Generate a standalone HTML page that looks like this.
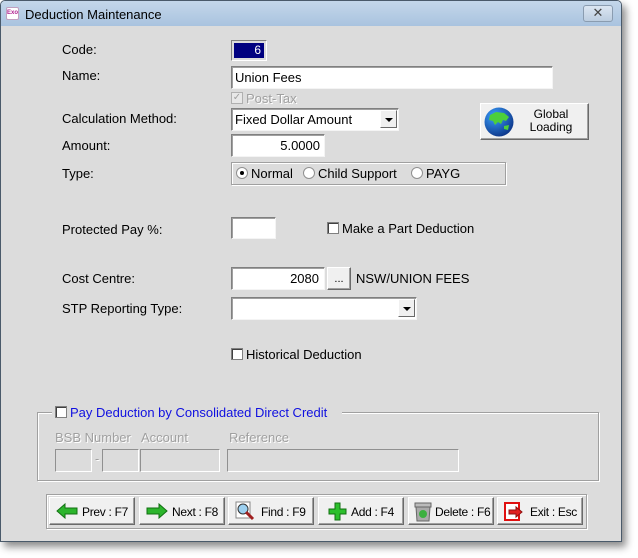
<!DOCTYPE html><html><head><style>
*{box-sizing:border-box;margin:0;padding:0}
body{width:638px;height:558px;background:#fff;position:relative;overflow:hidden;font-family:"Liberation Sans",sans-serif;font-size:12.5px;color:#000}
.a{position:absolute;white-space:nowrap}
.win{left:0;top:0;width:622px;height:542px;background:#dcdcdc;border:1px solid #4a5a6a;box-shadow:4px 5px 8px rgba(0,0,0,.45);border-radius:5px 5px 0 0}
.tb{left:1px;top:1px;width:620px;height:25px;background:linear-gradient(#c4d7ea,#a9c3df);border-radius:4px 4px 0 0}
.in{background:#fff;border:1px solid;border-color:#808080 #f4f4f4 #f4f4f4 #808080;box-shadow:inset 1px 1px 0 #a0a0a0}
.lb{font-size:13px}
.cb{width:12px;height:12px;background:#fff;border:1px solid #808080;box-shadow:inset 1px 1px 0 #404040}
.rd{width:12px;height:12px;border-radius:50%;background:#fff;border:1px solid #909090}
.btn{background:#f0f0f0;border:1px solid;border-color:#fff #6a6a6a #6a6a6a #fff;box-shadow:inset -1px -1px 0 #a0a0a0}
.dd{width:17px;height:18px;background:#f0f0f0;border:1px solid;border-color:#fff #6a6a6a #6a6a6a #fff;top:1px;right:1px}
.dd:after{content:"";position:absolute;left:4px;top:7px;border:4px solid transparent;border-top:4px solid #000;border-bottom:0}
.dis{color:#a0a0a0;text-shadow:1px 1px 0 #fff}
.din{background:#dcdcdc;border:1px solid;border-color:#909090 #fff #fff #909090}
.fb{top:497px;height:28px;width:86px;font-size:12px;letter-spacing:-.3px}
.fb span{position:absolute;top:7px}
</style></head><body>
<div class="a win"></div>
<div class="a tb"></div>
<div class="a" style="left:6px;top:7px;width:13px;height:13px;background:#fff;border-radius:2px;border:1px solid #c0a0c0;font-size:6px;color:#b02090;text-align:center;line-height:11px;font-weight:bold">Exo</div>
<div class="a lb" style="left:25px;top:7px">Deduction Maintenance</div>
<div class="a" style="left:583px;top:5px;width:30px;height:17px;border:1px solid #8a9cb0;border-radius:3px;background:linear-gradient(#dbe6f2,#bccde0);text-align:center;font-size:13px;line-height:14px;color:#444">✕</div>

<div class="a lb" style="left:62px;top:42px">Code:</div>
<div class="a" style="left:231px;top:40px;width:36px;height:21px;border:1px solid;border-color:#808080 #fff #fff #808080;background:#dcdcdc"><div style="position:absolute;left:2px;top:2px;width:30px;height:15px;background:#000080;color:#fff;text-align:right;padding-right:3px;font-size:12px;line-height:15px">6</div></div>
<div class="a lb" style="left:62px;top:68px">Name:</div>
<div class="a in" style="left:231px;top:66px;width:322px;height:23px"><span class="a lb" style="left:3px;top:3px">Union Fees</span></div>
<div class="a cb" style="left:231px;top:92px;border-color:#b0b0b0;box-shadow:none;background:#e8e8e8;color:#a0a0a0;font-size:10px;line-height:10px;text-align:center">✓</div>
<div class="a lb dis" style="left:246px;top:91px">Post-Tax</div>
<div class="a lb" style="left:62px;top:111px">Calculation Method:</div>
<div class="a in" style="left:231px;top:108px;width:168px;height:23px"><span class="a lb" style="left:3px;top:3px">Fixed Dollar Amount</span><div class="a dd"></div></div>
<div class="a btn" style="left:480px;top:103px;width:109px;height:37px"></div>
<svg class="a" style="left:484px;top:107px" width="30" height="30" viewBox="0 0 30 30"><defs><radialGradient id="g" cx=".35" cy=".3" r=".8"><stop offset="0" stop-color="#3aa0ff"/><stop offset="1" stop-color="#0a2e80"/></radialGradient></defs><circle cx="15" cy="15" r="14.5" fill="url(#g)"/><path d="M6 8 L12 5 L20 6 L25 10 L22 14 L19 13 L17 17 L14 15 L11 18 L9 14 L5 13Z M20 19 L25 18 L24 23 L20 22Z" fill="#4ccf3c"/></svg>
<div class="a" style="left:520px;top:108px;width:62px;text-align:center;font-size:12px;line-height:13px">Global<br>Loading</div>
<div class="a lb" style="left:62px;top:138px">Amount:</div>
<div class="a in" style="left:231px;top:134px;width:94px;height:23px"><span class="a lb" style="right:4px;top:3px">5.0000</span></div>
<div class="a lb" style="left:62px;top:166px">Type:</div>
<div class="a" style="left:231px;top:162px;width:275px;height:23px;border:1px solid #a0a0a0;box-shadow:inset 1px 1px 0 #fff,1px 1px 0 #fff"></div>
<div class="a rd" style="left:236px;top:167px"><div style="position:absolute;left:3px;top:3px;width:4px;height:4px;border-radius:50%;background:#000"></div></div>
<div class="a lb" style="left:251px;top:166px">Normal</div>
<div class="a rd" style="left:303px;top:167px"></div>
<div class="a lb" style="left:318px;top:166px">Child Support</div>
<div class="a rd" style="left:411px;top:167px"></div>
<div class="a lb" style="left:426px;top:166px">PAYG</div>

<div class="a lb" style="left:62px;top:222px">Protected Pay %:</div>
<div class="a in" style="left:231px;top:217px;width:45px;height:22px"></div>
<div class="a cb" style="left:327px;top:222px"></div>
<div class="a lb" style="left:342px;top:221px">Make a Part Deduction</div>
<div class="a lb" style="left:62px;top:271px">Cost Centre:</div>
<div class="a in" style="left:231px;top:267px;width:94px;height:23px"><span class="a lb" style="right:5px;top:3px">2080</span></div>
<div class="a btn" style="left:327px;top:267px;width:24px;height:23px;text-align:center;font-size:11px;line-height:22px">...</div>
<div class="a lb" style="left:356px;top:271px">NSW/UNION FEES</div>
<div class="a lb" style="left:62px;top:301px">STP Reporting Type:</div>
<div class="a in" style="left:231px;top:297px;width:186px;height:23px"><div class="a dd"></div></div>
<div class="a cb" style="left:231px;top:348px"></div>
<div class="a lb" style="left:246px;top:347px">Historical Deduction</div>

<div class="a" style="left:37px;top:412px;width:562px;height:69px;border:1px solid #a0a0a0;box-shadow:inset 1px 1px 0 #fff,1px 1px 0 #fff"></div>
<div class="a" style="left:52px;top:404px;width:290px;height:16px;background:#dcdcdc"></div>
<div class="a cb" style="left:55px;top:406px"></div>
<div class="a lb" style="left:70px;top:405px;color:#1010e0">Pay Deduction by Consolidated Direct Credit</div>
<div class="a lb dis" style="left:55px;top:430px">BSB Number</div>
<div class="a lb dis" style="left:141px;top:430px">Account</div>
<div class="a lb dis" style="left:229px;top:430px">Reference</div>
<div class="a din" style="left:55px;top:449px;width:37px;height:23px"></div>
<div class="a dis" style="left:95px;top:452px">-</div>
<div class="a din" style="left:102px;top:449px;width:37px;height:23px"></div>
<div class="a din" style="left:140px;top:449px;width:80px;height:23px"></div>
<div class="a din" style="left:227px;top:449px;width:232px;height:23px"></div>

<div class="a" style="left:46px;top:494px;width:541px;height:35px;border:1px solid #a0a0a0;box-shadow:inset 1px 1px 0 #fff,1px 1px 0 #fff"></div>
<div class="a btn fb" style="left:49px"><svg class="a" style="left:6px;top:5px" width="22" height="16"><path d="M1 8 L9 1 L9 5 L21 5 L21 11 L9 11 L9 15Z" fill="#2cb52c" stroke="#127012"/></svg><span style="left:32px">Prev : F7</span></div>
<div class="a btn fb" style="left:139px"><svg class="a" style="left:6px;top:5px" width="22" height="16"><path d="M21 8 L13 1 L13 5 L1 5 L1 11 L13 11 L13 15Z" fill="#2cb52c" stroke="#127012"/></svg><span style="left:32px">Next : F8</span></div>
<div class="a btn fb" style="left:228px"><svg class="a" style="left:6px;top:3px" width="22" height="20"><rect x="1" y="1" width="14" height="16" fill="#fff" stroke="#888"/><circle cx="8" cy="8" r="5" fill="#9cd0f0" stroke="#333"/><path d="M11 11 L18 18" stroke="#a02020" stroke-width="3"/></svg><span style="left:32px">Find : F9</span></div>
<div class="a btn fb" style="left:318px"><svg class="a" style="left:9px;top:4px" width="20" height="20"><path d="M7 1 H12 V7 H18 V12 H12 V18 H7 V12 H1 V7 H7Z" fill="#2cc02c" stroke="#127012"/></svg><span style="left:32px">Add : F4</span></div>
<div class="a btn fb" style="left:408px"><svg class="a" style="left:4px;top:3px" width="20" height="22"><rect x="2" y="2" width="16" height="4" fill="#bbb" stroke="#666"/><path d="M3 6 H17 L16 20 H4Z" fill="#aaa" stroke="#666"/><circle cx="10" cy="13" r="4" fill="#3cb040"/></svg><span style="left:26px">Delete : F6</span></div>
<div class="a btn fb" style="left:497px"><svg class="a" style="left:6px;top:4px" width="22" height="20"><rect x="1" y="1" width="14" height="17" fill="#fff" stroke="#e01010" stroke-width="2"/><path d="M5 8 H12 V5 L18 10 L12 15 V12 H5Z" fill="#e02020" stroke="#901010"/></svg><span style="left:32px">Exit : Esc</span></div>
</body></html>
